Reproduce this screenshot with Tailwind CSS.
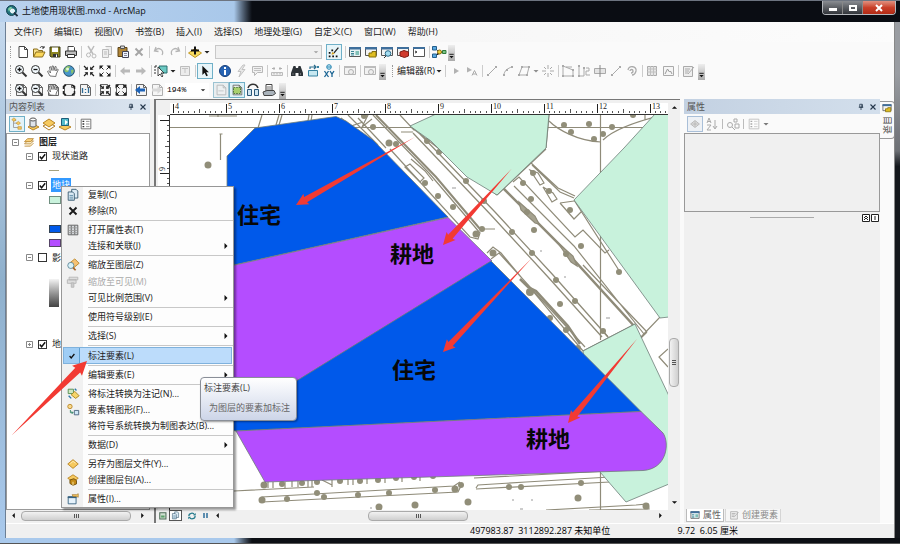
<!DOCTYPE html>
<html lang="zh-CN">
<head>
    <meta charset="utf-8">
    <meta name="viewport" content="width=device-width, initial-scale=1.0">
    <title>土地使用现状图.mxd - ArcMap</title>
    <script src="https://cdn.jsdelivr.net/npm/@tailwindcss/browser@4"></script>
</head>
<body class="relative flex h-screen flex-col overflow-hidden bg-[#15181d] font-['Open_Sans','Noto_Sans_CJK_SC',sans-serif] text-[9px] leading-3 text-[#222]">

    <!-- Icon set, 16x16 -->
    <svg class="hidden" xmlns="http://www.w3.org/2000/svg">
        <symbol id="i-new" viewBox="0 0 16 16"><path d="M4 2.500h5.500l3 3v8H4z" fill="#fff" stroke="#444"/><path d="M9.500 2.500v3h3" fill="none" stroke="#444"/></symbol>
        <symbol id="i-open" viewBox="0 0 16 16"><path d="M2.500 13V5h4l1 1.500h4V8" fill="#f7e08a" stroke="#8a6d1c"/><path d="M2.500 13l2.500-5h9l-2.500 5z" fill="#fbd75b" stroke="#8a6d1c"/><path d="M9 4c1-2 3-2 4 0m0-2v2h-2" fill="none" stroke="#333"/></symbol>
        <symbol id="i-save" viewBox="0 0 16 16"><path d="M3 3h10v10H4l-1-1z" fill="#8b8420" stroke="#3b3a18"/><path d="M5 3.500h6V8H5z" fill="#fff"/><path d="M6 10h5v3H6z" fill="#333"/><path d="M9 10.500h1V13H9z" fill="#fff"/></symbol>
        <symbol id="i-print" viewBox="0 0 16 16"><path d="M5 7V2.500h5.500l1 1V7" fill="#fff" stroke="#444"/><path d="M2.500 7h11v4.500h-11z" fill="#bbb" stroke="#333"/><path d="M4.500 10.500h7v3h-7z" fill="#fff" stroke="#333"/></symbol>
        <symbol id="i-cut" viewBox="0 0 16 16"><path d="M5 2l5 8M11 2L7 9" stroke="#bbb" stroke-width="1.500"/><circle cx="5.500" cy="11" r="2" fill="none" stroke="#bbb"/><circle cx="11" cy="12" r="2" fill="none" stroke="#bbb"/></symbol>
        <symbol id="i-copy-off" viewBox="0 0 16 16"><path d="M3.500 5.500h6v8h-6zM6.500 2.500h6v8h-3" fill="#eee" stroke="#bbb"/><path d="M5 8h3M5 10h3" stroke="#bbb"/></symbol>
        <symbol id="i-copy" viewBox="0 0 16 16"><path d="M6.500 1.500h5l2 2v8h-7z" fill="#dcebf5" stroke="#33576e"/><path d="M2.500 4.500h5l2 2v7.500h-7z" fill="#dcebf5" stroke="#33576e"/><path d="M4 8.500h4M4 10.500h4M4 12.500h4" stroke="#5b8aa6"/></symbol>
        <symbol id="i-paste" viewBox="0 0 16 16"><path d="M3 3.500h9v9H3z" fill="#b08536" stroke="#5d4519"/><path d="M5.500 2h4v2.500h-4z" fill="#ddd" stroke="#555"/><path d="M7.500 7.500h6v6h-6z" fill="#eef4ff" stroke="#445"/><path d="M9 9.500h3M9 11.500h3" stroke="#889"/></symbol>
        <symbol id="i-x-off" viewBox="0 0 16 16"><path d="M4.500 4.500l7 7m0-7l-7 7" stroke="#a5a5a5" stroke-width="2"/></symbol>
        <symbol id="i-x" viewBox="0 0 16 16"><path d="M4 4l8 8m0-8l-8 8" stroke="#1a1a1a" stroke-width="2.200"/></symbol>
        <symbol id="i-undo" viewBox="0 0 16 16"><path d="M5 3L3.500 7l4 .5M4 7c3-5 10-1 7 4" fill="none" stroke="#b5b5b5" stroke-width="1.300"/></symbol>
        <symbol id="i-redo" viewBox="0 0 16 16"><path d="M11 3l1.500 4-4 .5M12 7c-3-5-10-1-7 4" fill="none" stroke="#b5b5b5" stroke-width="1.300"/></symbol>
        <symbol id="i-add" viewBox="0 0 16 16"><path d="M1.500 9L8 4.500 14.500 9 8 13.500z" fill="#f8dc62" stroke="#c29820"/><path d="M8 2.500v8M4 6.500h8" stroke="#111" stroke-width="2"/></symbol>
        <symbol id="i-sketch" viewBox="0 0 16 16"><path d="M2 13h12" stroke="#111" stroke-width="2" stroke-dasharray="2 2"/><path d="M8 9l5-6" stroke="#222" stroke-width="1.500"/><path d="M5 11l1-3 3 2z" fill="#d9a21c"/><path d="M2 8h2v2H2zM5 5h2v2H5z" fill="#111"/></symbol>
        <symbol id="i-win-table" viewBox="0 0 16 16"><path d="M2.500 3.500h11v9h-11z" fill="#e6f2f4" stroke="#555"/><path d="M2 3h12v2.500H2z" fill="#3f6f9c"/><path d="M4 7.500h3M4 9.500h3M4 11h3" stroke="#3c8796"/><path d="M8.500 7h3.500v4H8.500z" fill="#80bfb7"/></symbol>
        <symbol id="i-win-cat" viewBox="0 0 16 16"><path d="M2.500 3.500h11v8h-11z" fill="#f3f3f3" stroke="#555"/><path d="M2 3h12v2.500H2z" fill="#3f6f9c"/><path d="M6 9h3V7.500h4V13H6z" fill="#dfbd22" stroke="#86700b"/></symbol>
        <symbol id="i-win-search" viewBox="0 0 16 16"><path d="M2.500 3.500h11v8h-11z" fill="#f3f3f3" stroke="#555"/><path d="M2 3h12v2.500H2z" fill="#3f6f9c"/><circle cx="9" cy="9.500" r="2.800" fill="#a4dcf0" stroke="#2c6d8c"/><path d="M7 12l-2 2" stroke="#333"/></symbol>
        <symbol id="i-win-tool" viewBox="0 0 16 16"><path d="M2.500 3.500h11v8h-11z" fill="#f3f3f3" stroke="#555"/><path d="M2 3h12v2H2z" fill="#3f6f9c"/><path d="M5 8l4-1.500L13.500 8v4l-4 1.500L5 12z" fill="#d03a2c" stroke="#7d1c13"/></symbol>
        <symbol id="i-win-py" viewBox="0 0 16 16"><path d="M2.500 3.500h11v9h-11z" fill="#fff" stroke="#555"/><path d="M2 3h12v2H2z" fill="#3f6f9c"/><path d="M4 7l2 1-2 1" fill="none" stroke="#333"/></symbol>
        <symbol id="i-model" viewBox="0 0 16 16"><path d="M4 4l4 4M4 12l4-4h5" stroke="#444"/><path d="M1.500 2.500h4v3.500h-4z" fill="#5aa9e0" stroke="#235e8c"/><path d="M1.500 10h4v3.500h-4z" fill="#5aa9e0" stroke="#235e8c"/><circle cx="8.500" cy="8" r="2" fill="#f0cf3a" stroke="#8c7312"/><path d="M11.500 6.500h3.500v3h-3.500z" fill="#7dc488" stroke="#2f7a3a"/></symbol>
        <symbol id="i-zoomin" viewBox="0 0 16 16"><circle cx="6.500" cy="6.500" r="4" fill="#f4fbff" stroke="#333"/><path d="M9.500 9.500l4 4" stroke="#333" stroke-width="2"/><path d="M4.500 6.500h4M6.500 4.500v4" stroke="#111" stroke-width="1.300"/></symbol>
        <symbol id="i-zoomout" viewBox="0 0 16 16"><circle cx="6.500" cy="6.500" r="4" fill="#f4fbff" stroke="#333"/><path d="M9.500 9.500l4 4" stroke="#333" stroke-width="2"/><path d="M4.500 6.500h4" stroke="#111" stroke-width="1.300"/></symbol>
        <symbol id="i-pan" viewBox="0 0 16 16"><path d="M5 13L2.500 8.500l1-.7L5.500 10 4.500 4l1.200-.3L7 7.500V3h1.300L9 7.500l1-4 1.200.3-.4 4.200 1.500-2 1 .6-2 4.400-.5 2.500z" fill="#fff" stroke="#555" stroke-width=".8"/></symbol>
        <symbol id="i-globe" viewBox="0 0 16 16"><circle cx="8" cy="8" r="5.300" fill="#4795c9" stroke="#24506d"/><path d="M5 4c2-1.500 4-1 4 0S7 6 7.500 7.500 5 10 4 8.500 3.500 5.500 5 4zM10 7l2.500-.5c.5 2-.5 4-2 4.500z" fill="#8cc36a"/><circle cx="6.500" cy="6" r="1.500" fill="#e5f6d8"/></symbol>
        <symbol id="i-in4" viewBox="0 0 16 16"><path d="M3 3l3.500 3.500M13 3L9.500 6.500M3 13l3.500-3.500M13 13L9.500 9.500" stroke="#222" stroke-width="1.200"/><path d="M3.500 6.800h3.300V3.500zM12.500 6.800H9.200V3.500zM3.500 9.200h3.300v3.300zM12.500 9.200H9.200v3.300z" fill="#222"/></symbol>
        <symbol id="i-out4" viewBox="0 0 16 16"><path d="M3 3l3.500 3.500M13 3L9.500 6.500M3 13l3.500-3.500M13 13L9.500 9.500" stroke="#222"/><path d="M2.500 2.500h4l-4 4zM13.500 2.500h-4l4 4zM2.500 13.500h4l-4-4zM13.500 13.500h-4l4-4z" fill="#222"/></symbol>
        <symbol id="i-left-off" viewBox="0 0 16 16"><path d="M3 8l4.500-4v2.500H13v3H7.500V12z" fill="#b9b9b9"/></symbol>
        <symbol id="i-right-off" viewBox="0 0 16 16"><path d="M13 8L8.500 4v2.500H3v3h5.500V12z" fill="#b9b9b9"/></symbol>
        <symbol id="i-selfeat" viewBox="0 0 16 16"><path d="M6 3h8v7H8z" fill="#6bc9c3" stroke="#2b6f6e"/><path d="M2 3v8M2 3h3" stroke="#333" stroke-dasharray="2 1"/><path d="M5 4v9l2-2 2 3 1-1-2-3h3z" fill="#fff" stroke="#222" stroke-width=".8"/></symbol>
        <symbol id="i-box-off" viewBox="0 0 16 16"><path d="M3.500 3.500h9v9h-9z" fill="#ececec" stroke="#bdbdbd"/><path d="M5 5.500h6M8 6v4" stroke="#c4c4c4"/></symbol>
        <symbol id="i-cursor" viewBox="0 0 16 16"><path d="M5 2v10.500l2.500-2.500 2 4 1.800-1-2-3.700h3.200z" fill="#111"/></symbol>
        <symbol id="i-info" viewBox="0 0 16 16"><circle cx="8" cy="8" r="5.500" fill="#2764b4" stroke="#153d78"/><path d="M7 7h2v5H7zM7 4h2v2H7z" fill="#fff"/></symbol>
        <symbol id="i-bolt-off" viewBox="0 0 16 16"><path d="M10 2L5 8.500h3L6 14l6-7.500H9L12 2z" fill="#e9e9e9" stroke="#c3c3c3"/></symbol>
        <symbol id="i-note-off" viewBox="0 0 16 16"><path d="M3.500 3.500h10v6h-5l-3 3v-3h-2z" fill="#f1f1f1" stroke="#b8b8b8"/><path d="M5 5.500h7M5 7.500h7" stroke="#c0c0c0"/></symbol>
        <symbol id="i-ruler-off" viewBox="0 0 16 16"><path d="M2.500 9.500h11v3h-11z" fill="#eee" stroke="#bbb"/><path d="M5 10v1.500M8 10v1.500M11 10v1.500M3 5.500h3M10 5.500h3M5 4v3M11 4v3" stroke="#b0b0b0"/></symbol>
        <symbol id="i-find" viewBox="0 0 16 16"><path d="M4.500 3h2l.5 2h2l.500-2h2l2.500 7v3H9.500v-3h-3v3H2v-3z" fill="#2d3338"/><path d="M3.500 11h1M11 11h1" stroke="#aaa"/></symbol>
        <symbol id="i-route" viewBox="0 0 16 16"><path d="M3.500 7.500h9v5.500h-9z" fill="#c6e7f0" stroke="#3681a0"/><path d="M5 6V4h6m-2-2l2 2-2 2" fill="none" stroke="#2a6c8c" stroke-width="1.200"/><path d="M12 3h2v2h-2z" fill="#3681a0"/></symbol>
        <symbol id="i-xy" viewBox="0 0 16 16"><circle cx="8" cy="4" r="2.300" fill="#d2f0fb" stroke="#2b87b2"/><path d="M6 4h4" stroke="#2b87b2"/><path d="M3.500 8l4 6m0-6l-4 6M9 8l2 3 2-3m-2 3v3" fill="none" stroke="#1b6594" stroke-width="1.300"/></symbol>
        <symbol id="i-win-off" viewBox="0 0 16 16"><path d="M2.500 3.500h11v8h-11z" fill="#f2f2f2" stroke="#b5b5b5"/><path d="M2 3h12v2H2z" fill="#bcbcbc"/><circle cx="9" cy="9" r="2.500" fill="#eee" stroke="#b0b0b0"/></symbol>
        <symbol id="i-play-off" viewBox="0 0 16 16"><path d="M6 5L11 8l-5 3z" fill="#b2b2b2"/></symbol>
        <symbol id="i-playa-off" viewBox="0 0 16 16"><path d="M3 4l5 3-5 2.500z" fill="#b2b2b2"/><path d="M8 12.500l2.500-5 2.500 5M9 11h3" fill="none" stroke="#aaa"/></symbol>
        <symbol id="i-line-off" viewBox="0 0 16 16"><path d="M4 12l8-8" stroke="#aaa"/><path d="M3 11h2v2H3zM11 3h2v2h-2z" fill="#aaa"/></symbol>
        <symbol id="i-arc-off" viewBox="0 0 16 16"><path d="M4 12c0-4 4-7 8-8" fill="none" stroke="#aaa"/><path d="M3 11h2v2H3zM6 6h2v2H6zM11 3h2v2h-2z" fill="#aaa"/></symbol>
        <symbol id="i-poly-off" viewBox="0 0 16 16"><path d="M3 12L6 4h7l-2 8z" fill="none" stroke="#aaa"/><path d="M2 11h2v2H2zM5 3h2v2H5zM12 3h2v2h-2zM10 11h2v2h-2z" fill="#aaa"/></symbol>
        <symbol id="i-star-off" viewBox="0 0 16 16"><path d="M8 2v4M8 10v4M2 8h4M10 8h4M4 4l2 2M12 4l-2 2M4 12l2-2M12 12l-2-2" stroke="#aaa"/></symbol>
        <symbol id="i-vert-off" viewBox="0 0 16 16"><path d="M3 3v10h10V7L3 3M6 4h6" fill="none" stroke="#aaa"/><path d="M2 2h2v2H2zM2 12h2v2H2zM12 12h2v2h-2zM12 6h2v2h-2z" fill="#aaa"/></symbol>
        <symbol id="i-cols-off" viewBox="0 0 16 16"><path d="M3 3v10M8 4v9M3 13h5M10 5h3v3h-3v4h4" fill="none" stroke="#aaa"/><path d="M2 2h2v2H2zM7 4h2v2H7zM2 12h2v2H2z" fill="#aaa"/></symbol>
        <symbol id="i-split-off" viewBox="0 0 16 16"><path d="M2.500 5.500h11v5h-11z" fill="#e4e4e4" stroke="#aaa"/><path d="M8 2v12" stroke="#888"/></symbol>
        <symbol id="i-rot-off" viewBox="0 0 16 16"><path d="M4 7c1-5 9-4 8 1-.500 2-2 4-4 4M6 8c0-2 3-2 3 0s-2 2-2 2" fill="none" stroke="#aaa" stroke-width="1.300"/></symbol>
        <symbol id="i-table-off" viewBox="0 0 16 16"><path d="M3.500 3.500h9v9h-9z" fill="#e6e6e6" stroke="#aaa"/><path d="M3 6h10M3 9h10M6.500 3v10M9.500 3v10" stroke="#c0c0c0"/></symbol>
        <symbol id="i-mount-off" viewBox="0 0 16 16"><path d="M3.500 3.500h10v9h-10z" fill="#f5f5f5" stroke="#aaa"/><path d="M5 11l2.500-5 2 3 1-1 1.500 3" fill="none" stroke="#999"/></symbol>
        <symbol id="i-edit-off" viewBox="0 0 16 16"><path d="M3.500 3.500h9v10h-9z" fill="#eee" stroke="#aaa"/><path d="M5 6h5M5 8h4M5 10h3M8 11l6-7" stroke="#aaa"/></symbol>
        <symbol id="i-page" viewBox="0 0 16 16"><path d="M3.500 2.500h7l3 3v8h-10z" fill="#f4f4f4" stroke="#666"/><path d="M10.500 2.500v3h3" fill="none" stroke="#666"/></symbol>
        <symbol id="i-pin" viewBox="0 0 16 16"><path d="M5.500 2.500h5v6h-5zM3.500 8.500h9M8 9v5" fill="none" stroke="#26384d" stroke-width="1.600"/><path d="M9 3h2v6H9z" fill="#26384d"/></symbol>
        <symbol id="i-close" viewBox="0 0 16 16"><path d="M3 3l10 10m0-10L3 13" stroke="#26384d" stroke-width="2.200"/></symbol>
        <symbol id="i-layer" viewBox="0 0 16 16"><path d="M2 8l6-5 6 5-6 5z" fill="#f6c95e" stroke="#b88423"/><path d="M5 7.500L8 5l3 2" fill="none" stroke="#fff0bf"/></symbol>
        <symbol id="i-layers" viewBox="0 0 16 16"><path d="M2 10.500h8l4-4H6zM2 13.500h8l4-4" fill="#fff3d0" stroke="#b07b22"/><path d="M2 7.500h8l4-4H6z" fill="#fbd27a" stroke="#b07b22"/></symbol>
        <symbol id="i-stack" viewBox="0 0 16 16"><path d="M2 10l6-3 6 3-6 4z" fill="#fff" stroke="#b07b22"/><path d="M2 7l6-4 6 4-6 4z" fill="#f6c95e" stroke="#b88423"/></symbol>
        <symbol id="i-db" viewBox="0 0 16 16"><path d="M3 11l5-3 6 3-6 3z" fill="#f6c95e" stroke="#b88423"/><path d="M5 3.500v6c0 2 6 2 6 0v-6z" fill="#dfe4ea" stroke="#555"/><ellipse cx="8" cy="3.500" rx="3" ry="1.500" fill="#fff" stroke="#555"/></symbol>
        <symbol id="i-tree" viewBox="0 0 16 16"><path d="M4 4v8h5M4 7h5M4 4h3" fill="none" stroke="#999"/><path d="M2 3l2.500-2L7 3 4.500 5zM7 7l2.500-2L12 7 9.500 9z" fill="#f6c95e" stroke="#b88423" stroke-width=".6"/><path d="M9 11h4v3H9z" fill="#f6c95e" stroke="#b88423" stroke-width=".6"/></symbol>
        <symbol id="i-selmap" viewBox="0 0 16 16"><path d="M2 11l6-3 6 3-6 3z" fill="#f6c95e" stroke="#b88423"/><path d="M4.500 2.500h7v7h-7z" fill="#52bccb" stroke="#1d5d7a"/><path d="M8 4v5l3-3z" fill="#fff"/></symbol>
        <symbol id="i-list" viewBox="0 0 16 16"><path d="M2.500 2.500h11v11h-11z" fill="#fff" stroke="#666"/><path d="M4 5h2M4 8h2M4 11h2" stroke="#333" stroke-width="1.600"/><path d="M8 5h4M8 8h4M8 11h4" stroke="#888"/></symbol>
        <symbol id="i-grid" viewBox="0 0 16 16"><path d="M2.500 2.500h11v11h-11z" fill="#d8dcdf" stroke="#555"/><path d="M6 3v10M10 3v10" stroke="#555"/><path d="M3 5.500h10M3 8.500h10M3 11h10" stroke="#999"/></symbol>
        <symbol id="i-zoomlayer" viewBox="0 0 16 16"><path d="M4 6l6-5 5 5-6 5z" fill="#f6c275" stroke="#b88423"/><circle cx="5.500" cy="8.500" r="3.500" fill="#d9f1f8" stroke="#5d8798"/><path d="M8 11l3 3" stroke="#a5652a" stroke-width="2"/></symbol>
        <symbol id="i-zoomvis" viewBox="0 0 16 16"><path d="M3.500 2.500h10v3h-10zM1.500 5.500h10v4h-10z" fill="#ddd" stroke="#b5b5b5"/><path d="M6 9h3v5H6z" fill="#ccc" stroke="#b5b5b5"/></symbol>
        <symbol id="i-convert" viewBox="0 0 16 16"><path d="M2.500 2.500h6v5h-6z" fill="#cfe8c4" stroke="#4f8a4b"/><path d="M6 9l4-4 5 5-4 3z" fill="#f6d56c" stroke="#a88018"/><path d="M3 10l3 3M10 2l2 2" stroke="#2d79a8" stroke-width="1.600"/></symbol>
        <symbol id="i-graphic" viewBox="0 0 16 16"><circle cx="4.500" cy="4" r="2.500" fill="#f9d98c" stroke="#b88423"/><path d="M5 8v3h3M6.500 9.500L8 11l-1.500 1.500" fill="none" stroke="#2a8060"/><path d="M9.500 8.500h5v5h-5z" fill="#cfe7f6" stroke="#46607a"/></symbol>
        <symbol id="i-pack" viewBox="0 0 16 16"><path d="M2 6l6-4 6 4-6 4z" fill="#f6c95e" stroke="#b88423"/><path d="M4.500 8L9 6.500l3 2v4L8 14l-3.500-2z" fill="#c58b17" stroke="#6b4906"/><path d="M8 10v4" stroke="#fff0b0"/></symbol>
        <symbol id="i-props" viewBox="0 0 16 16"><path d="M2.500 5.500h9v8h-9z" fill="#e6f2fb" stroke="#35607f"/><path d="M2 5h10v2H2z" fill="#35607f"/><path d="M7 3h5l2-1v4l-2-1H8z" fill="#f7c864" stroke="#9a6b19" stroke-width=".7"/></symbol>
        <symbol id="i-more" viewBox="0 0 8 16"><path d="M1.500 9.500h5" stroke="#111"/><path d="M1.500 11.500h5L4 14z" fill="#111"/></symbol>
        <symbol id="i-caret" viewBox="0 0 8 16"><path d="M1.500 7h5L4 9.500z" fill="#222"/></symbol>
        <symbol id="i-right" viewBox="0 0 8 8"><path d="M2.500 1l3 3-3 3z" fill="#111"/></symbol>
        <symbol id="i-tick" viewBox="0 0 10 10"><path d="M2 5l2 2.500L8 2.500" fill="none" stroke="#111" stroke-width="1.600"/></symbol>
    </svg>

    <!-- Title bar -->
    <header class="flex h-[22px] shrink-0 items-start justify-between border-t border-[#6d7480] bg-linear-to-r from-[#b9d2ee] from-0% via-[#a9c8ea] via-26% to-[#0a0d13] to-28% pl-1.5">
        <h1 class="flex items-center gap-1 pt-1 text-[#111]">
            <svg class="h-3 w-3" viewBox="0 0 12 12"><circle cx="5.500" cy="5.500" r="5" fill="#1f6f7c" stroke="#174551"/><path d="M2 4c2-3 4-2 4-1s-3 2-3 4z" fill="#7fd0a2"/><circle cx="6.500" cy="6" r="2" fill="#d9f4fb" stroke="#fff"/><path d="M8 7.500l3.500 3.500" stroke="#234" stroke-width="1.800"/></svg>
            土地使用现状图.mxd - ArcMap
        </h1>
        <div class="mr-1 flex h-[14px] overflow-hidden rounded-b border border-t-0 border-[#b5b8bd]">
            <button aria-label="最小化" class="flex w-5 items-center justify-center border-r border-[#888] bg-linear-to-b from-[#8a8d92] to-[#33363b]"><span class="mt-1 h-[3px] w-2 bg-white"></span></button>
            <button aria-label="最大化" class="flex w-5 items-center justify-center border-r border-[#888] bg-linear-to-b from-[#8a8d92] to-[#33363b]"><span class="h-1.5 w-2 border-2 border-white"></span></button>
            <button aria-label="关闭" class="flex w-8 items-center justify-center bg-linear-to-b from-[#e0907f] via-[#c9402a] to-[#b22a14]"><svg class="h-2 w-2" viewBox="0 0 8 8"><path d="M1 1l6 6m0-6L1 7" stroke="#fff" stroke-width="2"/></svg></button>
        </div>
    </header>

    <div class="flex min-h-0 flex-1">
        <div class="w-1.5 shrink-0 border-r border-[#6c7f95] bg-linear-to-b from-[#c5d9ee] via-[#8fb0cc] to-[#a9c9ec]"></div>

        <div class="flex min-w-0 flex-1 flex-col bg-[#fafafa]">
            <!-- Menu bar -->
            <nav class="flex h-5 shrink-0 items-center gap-3 bg-linear-to-r from-[#f2f2f2] to-[#fcfcfc] pl-2 whitespace-nowrap">
                <button>文件(F)</button>
                <button>编辑(E)</button>
                <button>视图(V)</button>
                <button>书签(B)</button>
                <button>插入(I)</button>
                <button>选择(S)</button>
                <button>地理处理(G)</button>
                <button>自定义(C)</button>
                <button>窗口(W)</button>
                <button>帮助(H)</button>
            </nav>

            <!-- Standard toolbar -->
            <div class="flex h-[19px] shrink-0 items-center pl-1">
                <span class="mr-1 h-3 border-l border-dotted border-[#999]"></span>
                <button aria-label="新建"><svg class="h-4 w-4"><use href="#i-new"/></svg></button>
                <button aria-label="打开"><svg class="h-4 w-4"><use href="#i-open"/></svg></button>
                <button aria-label="保存"><svg class="h-4 w-4"><use href="#i-save"/></svg></button>
                <button aria-label="打印"><svg class="h-4 w-4"><use href="#i-print"/></svg></button>
                <span class="ml-[2px] mr-px h-3 w-px bg-[#ccc]"></span>
                <button aria-label="剪切"><svg class="h-4 w-4"><use href="#i-cut"/></svg></button>
                <button aria-label="复制"><svg class="h-4 w-4"><use href="#i-copy-off"/></svg></button>
                <button aria-label="粘贴"><svg class="h-4 w-4"><use href="#i-paste"/></svg></button>
                <button aria-label="删除"><svg class="h-4 w-4"><use href="#i-x-off"/></svg></button>
                <span class="ml-[2px] mr-px h-3 w-px bg-[#ccc]"></span>
                <button aria-label="撤销"><svg class="h-4 w-4"><use href="#i-undo"/></svg></button>
                <button aria-label="恢复"><svg class="h-4 w-4"><use href="#i-redo"/></svg></button>
                <span class="ml-[2px] mr-px h-3 w-px bg-[#ccc]"></span>
                <button aria-label="添加数据" class="flex"><svg class="h-4 w-4"><use href="#i-add"/></svg><svg class="h-4 w-2"><use href="#i-caret"/></svg></button>
                <span class="relative ml-1 flex">
                    <select aria-label="比例" disabled class="h-[14px] w-[107px] appearance-none border border-[#c8c8c8] bg-[#f0f0f0]"><option></option></select>
                    <svg class="absolute right-0.5 top-0 h-[14px] w-2 opacity-40"><use href="#i-caret"/></svg>
                </span>
                <button aria-label="编辑器工具条" class="ml-1 mr-[2px] border border-[#6fb0c8] bg-[#e8f5f9]"><svg class="h-[14px] w-[14px]"><use href="#i-sketch"/></svg></button>
                <span class="mx-px h-3 w-px bg-[#ccc]"></span>
                <button aria-label="内容列表"><svg class="h-4 w-4"><use href="#i-win-table"/></svg></button>
                <button aria-label="目录"><svg class="h-4 w-4"><use href="#i-win-cat"/></svg></button>
                <button aria-label="搜索"><svg class="h-4 w-4"><use href="#i-win-search"/></svg></button>
                <button aria-label="工具箱"><svg class="h-4 w-4"><use href="#i-win-tool"/></svg></button>
                <button aria-label="Python"><svg class="h-4 w-4"><use href="#i-win-py"/></svg></button>
                <span class="ml-[2px] mr-px h-3 w-px bg-[#ccc]"></span>
                <button aria-label="模型构建器"><svg class="h-4 w-4"><use href="#i-model"/></svg></button>
                <button aria-label="更多" class="ml-px self-end bg-linear-to-b from-[#eee] to-[#aaa]"><svg class="h-4 w-[7px]"><use href="#i-more"/></svg></button>
            </div>

            <!-- Tools and editor toolbars -->
            <div class="flex h-[19px] shrink-0 items-center pl-1">
                <span class="mr-0.5 h-3 border-l border-dotted border-[#999]"></span>
                <button aria-label="放大"><svg class="h-4 w-4"><use href="#i-zoomin"/></svg></button>
                <button aria-label="缩小"><svg class="h-4 w-4"><use href="#i-zoomout"/></svg></button>
                <button aria-label="平移"><svg class="h-4 w-4"><use href="#i-pan"/></svg></button>
                <button aria-label="全图"><svg class="h-4 w-4"><use href="#i-globe"/></svg></button>
                <span class="ml-[2px] mr-px h-3 w-px bg-[#ccc]"></span>
                <button aria-label="固定比例放大"><svg class="h-4 w-4"><use href="#i-in4"/></svg></button>
                <button aria-label="固定比例缩小"><svg class="h-4 w-4"><use href="#i-out4"/></svg></button>
                <span class="ml-[2px] mr-px h-3 w-px bg-[#ccc]"></span>
                <button aria-label="上一视图"><svg class="h-4 w-4"><use href="#i-left-off"/></svg></button>
                <button aria-label="下一视图"><svg class="h-4 w-4"><use href="#i-right-off"/></svg></button>
                <span class="ml-[2px] mr-px h-3 w-px bg-[#ccc]"></span>
                <button aria-label="选择要素" class="flex"><svg class="h-4 w-4"><use href="#i-selfeat"/></svg><svg class="h-4 w-2"><use href="#i-caret"/></svg></button>
                <button aria-label="清除选择"><svg class="h-4 w-4"><use href="#i-box-off"/></svg></button>
                <span class="ml-[2px] mr-px h-3 w-px bg-[#ccc]"></span>
                <button aria-label="选择元素" class="border border-[#6fb0c8] bg-[#e8f5f9]"><svg class="h-[14px] w-[14px]"><use href="#i-cursor"/></svg></button>
                <button aria-label="识别" class="ml-1"><svg class="h-4 w-4"><use href="#i-info"/></svg></button>
                <button aria-label="超链接"><svg class="h-4 w-4"><use href="#i-bolt-off"/></svg></button>
                <button aria-label="HTML 弹出窗口"><svg class="h-4 w-4"><use href="#i-note-off"/></svg></button>
                <span class="ml-[2px] mr-px h-3 w-px bg-[#ccc]"></span>
                <button aria-label="测量"><svg class="h-4 w-4"><use href="#i-ruler-off"/></svg></button>
                <span class="ml-[2px] mr-px h-3 w-px bg-[#ccc]"></span>
                <button aria-label="查找"><svg class="h-4 w-4"><use href="#i-find"/></svg></button>
                <button aria-label="查找路径"><svg class="h-4 w-4"><use href="#i-route"/></svg></button>
                <button aria-label="转到 XY"><svg class="h-4 w-4"><use href="#i-xy"/></svg></button>
                <span class="mx-[2px] h-3 w-px bg-[#ccc]"></span>
                <button aria-label="时间滑块"><svg class="h-4 w-4"><use href="#i-win-off"/></svg></button>
                <span class="ml-[2px] mr-px h-3 w-px bg-[#ccc]"></span>
                <button aria-label="查看器窗口"><svg class="h-4 w-4"><use href="#i-win-off"/></svg></button>
                <button aria-label="更多" class="ml-px self-end bg-linear-to-b from-[#eee] to-[#aaa]"><svg class="h-4 w-[7px]"><use href="#i-more"/></svg></button>
                <span class="ml-1.5 mr-1 h-3 border-l border-dotted border-[#999]"></span>
                <button class="flex items-center whitespace-nowrap">编辑器(R)<svg class="h-4 w-2"><use href="#i-caret"/></svg></button>
                <span class="mx-[2px] h-3 w-px bg-[#ccc]"></span>
                <button aria-label="编辑工具"><svg class="h-4 w-4"><use href="#i-play-off"/></svg></button>
                <button aria-label="编辑注记工具"><svg class="h-4 w-4"><use href="#i-playa-off"/></svg></button>
                <span class="ml-[2px] mr-px h-3 w-px bg-[#ccc]"></span>
                <button aria-label="直线段"><svg class="h-4 w-4"><use href="#i-line-off"/></svg></button>
                <button aria-label="弧段"><svg class="h-4 w-4"><use href="#i-arc-off"/></svg></button>
                <button aria-label="追踪" class="flex"><svg class="h-4 w-4"><use href="#i-poly-off"/></svg><svg class="h-4 w-2 opacity-50"><use href="#i-caret"/></svg></button>
                <button aria-label="点"><svg class="h-4 w-4"><use href="#i-star-off"/></svg></button>
                <span class="ml-[2px] mr-px h-3 w-px bg-[#ccc]"></span>
                <button aria-label="编辑折点"><svg class="h-4 w-4"><use href="#i-vert-off"/></svg></button>
                <button aria-label="整形要素"><svg class="h-4 w-4"><use href="#i-cols-off"/></svg></button>
                <button aria-label="裁剪面"><svg class="h-4 w-4"><use href="#i-split-off"/></svg></button>
                <button aria-label="分割"><svg class="h-4 w-4"><use href="#i-line-off"/></svg></button>
                <button aria-label="旋转"><svg class="h-4 w-4"><use href="#i-rot-off"/></svg></button>
                <span class="ml-[2px] mr-px h-3 w-px bg-[#ccc]"></span>
                <button aria-label="属性"><svg class="h-4 w-4"><use href="#i-table-off"/></svg></button>
                <button aria-label="草图属性"><svg class="h-4 w-4"><use href="#i-mount-off"/></svg></button>
                <span class="ml-[2px] mr-px h-3 w-px bg-[#ccc]"></span>
                <button aria-label="创建要素"><svg class="h-4 w-4"><use href="#i-edit-off"/></svg></button>
                <button aria-label="更多" class="ml-0.5 self-end bg-linear-to-b from-[#eee] to-[#aaa]"><svg class="h-4 w-[7px]"><use href="#i-more"/></svg></button>
            </div>

            <!-- Layout toolbar -->
            <div class="flex h-[19px] shrink-0 items-center pl-1">
                <span class="mr-0.5 h-3 border-l border-dotted border-[#999]"></span>
                <button aria-label="放大页面"><svg class="h-4 w-4" viewBox="0 0 16 16"><use href="#i-page"/><use href="#i-zoomin"/></svg></button>
                <button aria-label="缩小页面"><svg class="h-4 w-4" viewBox="0 0 16 16"><use href="#i-page"/><use href="#i-zoomout"/></svg></button>
                <button aria-label="平移页面"><svg class="h-4 w-4" viewBox="0 0 16 16"><use href="#i-page"/><use href="#i-pan"/></svg></button>
                <button aria-label="缩放整页"><svg class="h-4 w-4" viewBox="0 0 16 16"><use href="#i-page"/><path d="M2.500 7V4.500L5 3M13.500 7V4.500L11 3M2.500 9v2.500L5 13M13.500 9v2.500L11 13" fill="none" stroke="#222" stroke-width="1.500"/></svg></button>
                <button aria-label="缩放至100%"><svg class="h-4 w-4" viewBox="0 0 16 16"><use href="#i-page"/><path d="M5.500 6v5M11.500 6v5M8.500 7v1M8.500 10v1" stroke="#2d6b96" stroke-width="1.300"/></svg></button>
                <span class="ml-[2px] mr-px h-3 w-px bg-[#ccc]"></span>
                <button aria-label="页面固定放大"><svg class="h-4 w-4" viewBox="0 0 16 16"><use href="#i-page"/><use href="#i-in4"/></svg></button>
                <button aria-label="页面固定缩小"><svg class="h-4 w-4" viewBox="0 0 16 16"><use href="#i-page"/><use href="#i-out4"/></svg></button>
                <span class="ml-[2px] mr-px h-3 w-px bg-[#ccc]"></span>
                <button aria-label="上一范围"><svg class="h-4 w-4" viewBox="0 0 16 16"><use href="#i-page"/><path d="M2 8l5-4v2.500h5v3H7V12z" fill="#1d63b8"/></svg></button>
                <button aria-label="下一范围"><svg class="h-4 w-4 opacity-50" viewBox="0 0 16 16"><use href="#i-page"/><use href="#i-right-off"/></svg></button>
                <span class="relative flex">
                    <select aria-label="页面比例" class="h-[14px] w-11 appearance-none bg-white pl-0.5 font-['Liberation_Mono',monospace] text-[8px] leading-3 text-black"><option>194%</option></select>
                    <svg class="pointer-events-none absolute right-0.5 top-0 h-[14px] w-2"><use href="#i-caret"/></svg>
                </span>
                <button aria-label="切换描绘模式" class="ml-1 border border-[#9cc3d2] bg-[#e9eef0]"><svg class="h-[14px] w-[14px] opacity-40" viewBox="0 0 16 16"><use href="#i-page"/><path d="M5 9h6" stroke="#888"/></svg></button>
                <button aria-label="焦点数据框" class="border border-[#6fb0c8] bg-[#dff1f7]"><svg class="h-[14px] w-[14px]" viewBox="0 0 16 16"><use href="#i-page"/><path d="M4 5h8v7H4z" fill="#a9cf6d" stroke="#416b2c" stroke-dasharray="2 1"/></svg></button>
                <button aria-label="更改布局"><svg class="h-4 w-4" viewBox="0 0 16 16"><path d="M3 6c2-5 8-5 10 0" fill="none" stroke="#333" stroke-width="1.500"/><path d="M2.500 7.500h4v6h-4zM9.500 7.500h4v6h-4z" fill="#cfe4f0" stroke="#2b587a"/></svg></button>
                <button aria-label="数据驱动页面"><svg class="h-4 w-4" viewBox="0 0 16 16"><path d="M5 2.500h6v7H5z" fill="#fff" stroke="#444"/><path d="M6 5h4M6 7h4" stroke="#777"/><path d="M2 10l4-1.500h7l1.500 3-3 2H3z" fill="#aab3bb" stroke="#444"/></svg></button>
                <button aria-label="更多" class="ml-0.5 self-end bg-linear-to-b from-[#eee] to-[#aaa]"><svg class="h-4 w-[7px]"><use href="#i-more"/></svg></button>
            </div>

            <main class="flex min-h-0 flex-1 bg-[#f0f0f0]">
                <!-- Table of contents -->
                <aside class="mr-1 flex w-[144px] shrink-0 flex-col">
                    <div class="flex h-[15px] shrink-0 items-center bg-linear-to-r from-[#c6d3e2] to-[#dbe5f0] px-[3px] text-[#555]">
                        <h2 class="flex-1">内容列表</h2>
                        <button aria-label="固定"><svg class="mr-1 h-2 w-2"><use href="#i-pin"/></svg></button>
                        <button aria-label="关闭"><svg class="h-2 w-2"><use href="#i-close"/></svg></button>
                    </div>
                    <div class="flex h-[19px] shrink-0 items-center bg-[#fafafa] pl-[3px]">
                        <button aria-label="按绘制顺序列出" class="border border-[#6fb0c8] bg-[#e4f3f8]"><svg class="h-[14px] w-[14px]"><use href="#i-tree"/></svg></button>
                        <button aria-label="按源列出"><svg class="h-4 w-4"><use href="#i-db"/></svg></button>
                        <button aria-label="按可见性列出"><svg class="h-4 w-4"><use href="#i-stack"/></svg></button>
                        <button aria-label="按选择列出"><svg class="h-4 w-4"><use href="#i-selmap"/></svg></button>
                        <span class="mx-[2px] h-3 w-px bg-[#ccc]"></span>
                        <button aria-label="选项"><svg class="h-4 w-4 p-px"><use href="#i-list"/></svg></button>
                    </div>
                    <div class="min-h-0 flex-1 overflow-hidden border border-[#999] bg-white pt-px whitespace-nowrap">
                        <div class="flex h-[14px] items-center pl-[5px] font-bold">
                            <svg class="mr-1 h-[7px] w-[7px]" viewBox="0 0 7 7"><path d="M.5.5h6v6h-6zM2 3.500h3" fill="#fff" stroke="#888"/></svg>
                            <svg class="mr-1 h-3 w-3"><use href="#i-layers"/></svg>图层
                        </div>
                        <div class="flex h-[14px] items-center gap-[5px] pl-[19px]">
                            <svg class="h-[7px] w-[7px]" viewBox="0 0 7 7"><path d="M.5.5h6v6h-6zM2 3.500h3" fill="#fff" stroke="#888"/></svg>
                            <label class="flex items-center gap-[5px]"><span class="grid h-[9px] w-[9px]"><input type="checkbox" checked class="peer col-start-1 row-start-1 h-[9px] w-[9px] appearance-none border border-[#333] bg-white"><svg class="pointer-events-none invisible col-start-1 row-start-1 h-[9px] w-[9px] peer-checked:visible"><use href="#i-tick"/></svg></span>现状道路</label>
                        </div>
                        <div class="flex h-[15px] items-center pl-[42px]"><span class="h-px w-2.5 bg-[#a5a27e]"></span></div>
                        <div class="flex h-[14px] items-center gap-[5px] pl-[19px]">
                            <svg class="h-[7px] w-[7px]" viewBox="0 0 7 7"><path d="M.5.5h6v6h-6zM2 3.500h3" fill="#fff" stroke="#888"/></svg>
                            <label class="flex items-center gap-1"><span class="grid h-[9px] w-[9px]"><input type="checkbox" checked class="peer col-start-1 row-start-1 h-[9px] w-[9px] appearance-none border border-[#333] bg-white"><svg class="pointer-events-none invisible col-start-1 row-start-1 h-[9px] w-[9px] peer-checked:visible"><use href="#i-tick"/></svg></span><span class="bg-[#3399ff] px-px leading-[14px] text-white">地块</span></label>
                        </div>
                        <div class="flex h-[15px] items-center pl-[42px]"><span class="h-2 w-3 border border-[#6f8f7f] bg-[#c9f2dc]"></span></div>
                        <div class="h-[14px]"></div>
                        <div class="flex h-[15px] items-center pl-[42px]"><span class="h-2 w-3 border border-[#345] bg-[#0059ea]"></span></div>
                        <div class="flex h-[14px] items-center pl-[42px]"><span class="h-2 w-3 border border-[#546] bg-[#b44dff]"></span></div>
                        <div class="flex h-[15px] items-center gap-[5px] pl-[19px]">
                            <svg class="h-[7px] w-[7px]" viewBox="0 0 7 7"><path d="M.5.5h6v6h-6zM2 3.500h3" fill="#fff" stroke="#888"/></svg>
                            <label class="flex items-center gap-[5px]"><input type="checkbox" class="h-[9px] w-[9px] appearance-none border border-[#333] bg-white">影像</label>
                        </div>
                        <div class="h-[72px] pl-[42px] pt-[14px]"><div class="h-7 w-2.5 bg-linear-to-b from-[#f4f4f4] to-[#444]"></div></div>
                        <div class="flex h-[14px] items-center gap-[5px] pl-[19px]">
                            <svg class="h-[7px] w-[7px]" viewBox="0 0 7 7"><path d="M.5.5h6v6h-6zM2 3.500h3M3.500 2v3" fill="#fff" stroke="#888"/></svg>
                            <label class="flex items-center gap-[5px]"><span class="grid h-[9px] w-[9px]"><input type="checkbox" checked class="peer col-start-1 row-start-1 h-[9px] w-[9px] appearance-none border border-[#333] bg-white"><svg class="pointer-events-none invisible col-start-1 row-start-1 h-[9px] w-[9px] peer-checked:visible"><use href="#i-tick"/></svg></span>地形</label>
                        </div>
                    </div>
                    <div class="mb-0.5 flex h-[11px] shrink-0 items-center gap-1 px-1">
                        <svg class="h-[7px] w-[7px] rotate-180"><use href="#i-right"/></svg>
                        <div class="flex h-[10px] w-[110px] items-center justify-center gap-px rounded-sm border border-[#aaa] bg-linear-to-b from-[#f2f2f2] to-[#cfcfcf]"><span class="h-1 w-px bg-[#555]"></span><span class="h-1 w-px bg-[#555]"></span><span class="h-1 w-px bg-[#555]"></span></div>
                        <svg class="ml-auto h-[7px] w-[7px]"><use href="#i-right"/></svg>
                    </div>
                </aside>

                <!-- Map view -->
                <section class="flex min-w-0 flex-1 flex-col border-l-2 border-t border-[#777] bg-[#f0f0f0]">
                    <div class="flex h-[15px] shrink-0">
                        <div class="min-w-0 flex-1 overflow-hidden pl-[14px] pt-0.5">
                            <svg class="block h-[13px] w-full" viewBox="170 102 499 13" preserveAspectRatio="xMinYMin slice">
                                <defs>
                                    <pattern id="hticks" x="173" y="0" width="53" height="130" patternUnits="userSpaceOnUse">
                                        <path d="M.5 104v9" stroke="#222"/>
                                        <path d="M5.500 111v2M10.500 111v2M15.500 111v2M21.500 111v2M32.500 111v2M37.500 111v2M42.500 111v2M48.500 111v2M26.500 109v4" stroke="#555"/>
                                    </pattern>
                                </defs>
                                <path d="M170 103h499v12H170z" fill="#fff"/>
                                <path d="M170 103h499v12H170z" fill="url(#hticks)"/>
                                <path d="M170 114.500h499" stroke="#333"/>
                                <g font-family="Liberation Serif, serif" font-size="8" fill="#222">
                                    <text x="175" y="109">4</text><text x="228" y="109">5</text><text x="281" y="109">6</text><text x="334" y="109">7</text><text x="387" y="109">8</text><text x="440" y="109">9</text><text x="493" y="109">10</text><text x="546" y="109">11</text><text x="599" y="109">12</text><text x="652" y="109">13</text>
                                </g>
                            </svg>
                        </div>
                        <button aria-label="向上" class="w-3 shrink-0"><svg class="mx-auto h-[7px] w-[7px] -rotate-90"><use href="#i-right"/></svg></button>
                    </div>
                    <div class="flex min-h-0 flex-1">
                        <svg class="h-full w-[14px] shrink-0" viewBox="156 115 14 395" preserveAspectRatio="xMinYMin slice">
                            <defs>
                                <pattern id="vticks" x="0" y="120" width="170" height="53" patternUnits="userSpaceOnUse">
                                    <path d="M160 .5h9" stroke="#222"/>
                                    <path d="M167 5.500h2M167 10.500h2M167 15.500h2M167 21.500h2M167 32.500h2M167 37.500h2M167 42.500h2M167 48.500h2M165 26.500h4" stroke="#555"/>
                                </pattern>
                            </defs>
                            <path d="M158 115h11v395h-11z" fill="#fff"/>
                            <path d="M156 115h14v395h-14z" fill="url(#vticks)"/>
                            <path d="M169.500 115v395" stroke="#333"/>
                            <text transform="translate(165 171) rotate(-90)" font-family="Liberation Serif, serif" font-size="8" fill="#222">9</text>
                        </svg>
                        <svg class="h-full min-w-0 flex-1" viewBox="170 115 498 395" preserveAspectRatio="xMinYMin slice">
                            <path d="M170 115h498v395H170z" fill="#fff"/>

                            <!-- Roads -->
                            <g fill="none" stroke="#8f8b79" stroke-width="1.200">
                                <path d="M170 127.500h498M600.500 115v225M600.500 471v40M218 115v2M209 116h28M219.500 134h3M220.500 134v26M262 115l-4 13M279 115l-3 10M282 115l-3 10M309 115l-1 6M312 115l-1 6"/>
                                <path d="M341 118l10 8 12-4M348 115l30 30M368 115l-6 12 10-8M400 115l14 15 6-3M401 132h12M358 118l28 30"/>
                                <path d="M373 115l56 58 51 60-2 6-8-2-80-88"/>
                                <path d="M376 115l60 62 44 52" stroke-width="2"/>
                                <path d="M405 167l5-3 14 14-4 4zM411 159l14 12 8 10"/>
                                <path d="M420 134l75 78 58 63 55 62M413 133l78 82 57 62 54 60" stroke-width="1.300"/>
                                <path d="M411 127l36 28 50 40"/>
                                <path d="M503 188l60 60 72 79" stroke-width="2.500"/>
                                <path d="M514 186l60 60 70 88M583 265l64 67M647 332l-6 6"/>
                                <path d="M530 162l28 26 17 8M532 165l28 27 14 6M497 195l49-46"/>
                                <path d="M513 182l6-5 56 60 8-7 22 23 4-3M560 203l14-2M560 203l14 16 7-7M574 200l46 72"/>
                                <path d="M530 170l8 3 6 10-4 2zM543 187l10 6 4 6-5 3z"/>
                                <path d="M519 202l16 14 4 8-4-1-14-13zM558 243l15 13 4 10-6-4z" fill="#a5a28f"/>
                                <path d="M487 253l6-6 8 6 82 98M491 259l8-6 86 94"/>
                                <path d="M520 279l8 8 8 4 32 35 12 18" stroke-width="2.500"/>
                                <path d="M549 121c8 8 28 20 52 21M603 140c10-10 30-18 64-26M549 115l-3 33M645 115v5"/>
                                <path d="M482 229h13M640 338l20-21 8-1M668 349l-9 8 9 10"/>
                                <path d="M590 350l34-18M583 351l52-27M603 331l5 6"/>
                                <path d="M452 188h4M462 221h2M540 251h2M606 318h4M564 277h2" stroke="#999"/>
                                <path d="M234 491l80-4M474 478l135-7M262 500v-3l52-3 140-8 6-4M262 502l196-10 3-6M476 488l2-3 48-3 84-5M476 489l134-7M546 510l90-5 12-1 1 5-60 1"/>
                                <path d="M268 482v6M273 482v6M285 482v6M292 481v6M298 481v6M308 480v7M312 480v7M322 480l10 5M332 480v7M348 479v6M353 479v6M367 478v6M385 478v5M402 477v5M420 477v4"/>
                                <path d="M512 500h2M531 500h2M370 508h2M520 509h3" stroke="#999"/>
                            </g>
                            <g fill="#918e79">
                                <circle cx="208" cy="165" r="3.500"/><circle cx="364" cy="116" r="3"/><circle cx="373" cy="127" r="3"/><circle cx="389" cy="143" r="3.500"/><circle cx="396" cy="144" r="3"/>
                                <circle cx="564" cy="125" r="3"/><circle cx="589" cy="124" r="3"/><circle cx="612" cy="127" r="3"/><circle cx="571" cy="132" r="3"/><circle cx="594" cy="139" r="3"/><circle cx="603" cy="134" r="3"/><circle cx="633" cy="115" r="3"/>
                                <circle cx="427" cy="141" r="3"/><circle cx="439" cy="152" r="3"/><circle cx="466" cy="181" r="3"/><circle cx="484" cy="201" r="3"/><circle cx="512" cy="232" r="3"/><circle cx="532" cy="253" r="3"/><circle cx="556" cy="280" r="3"/><circle cx="575" cy="301" r="3"/><circle cx="603" cy="331" r="3"/>
                                <circle cx="425" cy="183" r="3"/><circle cx="438" cy="196" r="3"/><circle cx="453" cy="207" r="3"/><circle cx="482" cy="229" r="3"/><circle cx="476" cy="234" r="3.500"/><circle cx="493" cy="253" r="3.500"/>
                                <circle cx="523" cy="183" r="3"/><circle cx="531" cy="199" r="3"/><circle cx="527" cy="212" r="3"/><circle cx="534" cy="230" r="3"/><circle cx="533" cy="173" r="3"/><circle cx="549" cy="191" r="3"/><circle cx="570" cy="210" r="3"/><circle cx="581" cy="246" r="3"/><circle cx="566" cy="254" r="3"/><circle cx="619" cy="272" r="3"/>
                                <circle cx="560" cy="304" r="3"/><circle cx="530" cy="292" r="4"/><circle cx="550" cy="318" r="3"/><circle cx="566" cy="330" r="3"/><circle cx="578" cy="348" r="3"/>
                                <circle cx="264" cy="485" r="3.500"/><circle cx="282" cy="484" r="3"/><circle cx="302" cy="483" r="3"/><circle cx="317" cy="482" r="3"/><circle cx="340" cy="481" r="3"/><circle cx="360" cy="481" r="3"/><circle cx="378" cy="480" r="3"/><circle cx="396" cy="478" r="3"/><circle cx="414" cy="477" r="3"/><circle cx="433" cy="476" r="3"/>
                                <circle cx="262" cy="500" r="3.500"/><circle cx="287" cy="499" r="3"/><circle cx="317" cy="493" r="3"/><circle cx="324" cy="497" r="3"/><circle cx="358" cy="495" r="3"/><circle cx="389" cy="493" r="3"/><circle cx="435" cy="490" r="3"/><circle cx="455" cy="489" r="3.500"/><circle cx="461" cy="485" r="3"/>
                                <circle cx="509" cy="487" r="3"/><circle cx="521" cy="487" r="3"/><circle cx="581" cy="483" r="3"/><circle cx="578" cy="498" r="3.500"/><circle cx="646" cy="506" r="3.500"/><circle cx="468" cy="502" r="3.500"/><circle cx="415" cy="505" r="3.500"/><circle cx="379" cy="507" r="3.500"/>
                            </g>

                            <!-- Parcels -->
                            <g stroke="#6f7d78" stroke-width=".8">
                                <path d="M410 126l26-12h113l-3 34-49 47-30-18-36-36z" fill="#c8f2dc"/>
                                <path d="M655 114h14v203l-9 1-86-118 50-52z" fill="#c8f2dc"/>
                                <path d="M635 324l34 72v88l-43 18-26-30-17-121z" fill="#c8f2dc"/>
                                <path d="M227 156l28-28 81-11.500 10 4.500 27 19 75 77-214 48-7-60z" fill="#0059ea"/>
                                <path d="M448 217.500l44 43.500-195 120-80 48v-160z" fill="#b44dff"/>
                                <path d="M491 261l150 150.500L236 431l-16-3z" fill="#0059ea"/>
                                <path d="M236 431l405-19.500 22 21.500c7 10 4 36-20 37.500L265 482z" fill="#b44dff"/>
                            </g>

                            <g font-family="Noto Sans CJK SC, sans-serif" font-size="22" font-weight="700" fill="#080808">
                                <text x="237" y="223">住宅</text>
                                <text x="390" y="262">耕地</text>
                                <text x="392" y="378">住宅</text>
                                <text x="526" y="447">耕地</text>
                            </g>

                            <g fill="#f23a33">
                                <path transform="translate(296 205) rotate(-29.700)" d="M0 0L12-6 11-3 137 0 11 3 12 6z"/>
                                <path transform="translate(443 245) rotate(-48)" d="M0 0L12-6 11-3 103 0 11 3 12 6z"/>
                                <path transform="translate(443 352) rotate(-46.600)" d="M0 0L12-6 11-3 129 0 11 3 12 6z"/>
                                <path transform="translate(568 423) rotate(-50.600)" d="M0 0L12-6 11-3 109 0 11 3 12 6z"/>
                            </g>
                        </svg>
                        <div class="flex w-3 shrink-0 flex-col items-center pb-1">
                            <div class="mb-auto mt-[223px] flex h-[49px] w-2.5 flex-col items-center justify-center gap-px rounded-sm border border-[#aaa] bg-linear-to-r from-[#f2f2f2] to-[#cfcfcf]"><span class="h-px w-1 bg-[#555]"></span><span class="h-px w-1 bg-[#555]"></span><span class="h-px w-1 bg-[#555]"></span></div>
                            <svg class="h-[7px] w-[7px] rotate-90"><use href="#i-right"/></svg>
                        </div>
                    </div>
                    <div class="mb-0.5 flex h-[11px] shrink-0 items-center pr-4">
                        <button aria-label="数据视图"><svg class="ml-px h-[11px] w-[11px]" viewBox="0 0 16 16"><path d="M4 4h9v9H4z" fill="#cfe0d0" stroke="#4d6b57" stroke-width="1.500"/><path d="M6 8h5v3H6z" fill="#5aa06a"/></svg></button>
                        <button aria-label="布局视图" class="ml-px border border-[#555] bg-white"><svg class="h-[9px] w-[11px]"><use href="#i-copy"/></svg></button>
                        <button aria-label="刷新" class="ml-[5px]"><svg class="h-[10px] w-[10px]" viewBox="0 0 16 16"><path d="M3 8c0-5 7-6 9-2M13 8c0 5-7 6-9 2" fill="none" stroke="#247a8c" stroke-width="2"/><path d="M14 3v4h-4zM2 13V9h4z" fill="#247a8c"/></svg></button>
                        <button aria-label="暂停" class="ml-1"><svg class="h-[9px] w-[9px]" viewBox="0 0 9 9"><path d="M3 2v5M6 2v5" stroke="#2c6d9a" stroke-width="1.500"/></svg></button>
                        <svg class="ml-1 h-[7px] w-[7px] rotate-180"><use href="#i-right"/></svg>
                        <div class="ml-[147px] flex h-[10px] w-[100px] items-center justify-center gap-px rounded-sm border border-[#aaa] bg-linear-to-b from-[#f2f2f2] to-[#cfcfcf]"><span class="h-1 w-px bg-[#555]"></span><span class="h-1 w-px bg-[#555]"></span><span class="h-1 w-px bg-[#555]"></span></div>
                        <svg class="ml-auto h-[7px] w-[7px]"><use href="#i-right"/></svg>
                    </div>
                </section>

                <!-- Attributes -->
                <aside class="flex w-[200px] shrink-0 flex-col border-l-4 border-[#fafafa]">
                    <div class="flex h-[15px] shrink-0 items-center bg-linear-to-r from-[#c3d1e2] to-[#d3dfec] px-[3px] text-[#555]">
                        <h2 class="flex-1">属性</h2>
                        <button aria-label="固定"><svg class="mr-1 h-2 w-2"><use href="#i-pin"/></svg></button>
                        <button aria-label="关闭"><svg class="h-2 w-2"><use href="#i-close"/></svg></button>
                    </div>
                    <div class="flex h-[19px] shrink-0 items-center bg-[#fafafa] pl-[3px]">
                        <button aria-label="图层视图" class="border border-[#a9bfd8] bg-[#eef1f5]"><svg class="h-[14px] w-[14px]" viewBox="0 0 16 16"><path d="M3 8l5-4 5 4-5 4zM5 8h6M8 5v6" fill="#ddd" stroke="#b5b5b5"/></svg></button>
                        <button aria-label="排序" class="ml-px"><svg class="h-4 w-4" viewBox="0 0 16 16"><path d="M3 7l2-5 2 5M3.500 5.500h3M3 9h4l-4 5h4M11 4v8M9 10l2 3 2-3" fill="none" stroke="#aaa"/></svg></button>
                        <span class="mx-[2px] h-2.5 w-px bg-[#bbb]"></span>
                        <button aria-label="查询"><svg class="h-4 w-4" viewBox="0 0 16 16"><circle cx="5" cy="9" r="2.500" fill="none" stroke="#aaa"/><path d="M7 11l3 3M9 3h3v3H9zM10 8h4v4h-4z" fill="none" stroke="#aaa"/></svg></button>
                        <span class="mx-[2px] h-2.5 w-px bg-[#bbb]"></span>
                        <button aria-label="选项" class="flex"><svg class="h-4 w-4 p-px opacity-40"><use href="#i-list"/></svg><svg class="h-4 w-2 opacity-60"><use href="#i-caret"/></svg></button>
                    </div>
                    <div class="h-[79px] shrink-0 border border-[#999]"></div>
                    <div class="relative flex h-[11px] shrink-0 items-center justify-end gap-px pr-px">
                        <span class="absolute inset-x-0 mx-auto h-px w-16 bg-[#aaa]"></span>
                        <button aria-label="折叠"><svg class="h-2 w-2" viewBox="0 0 8 8"><path d="M.5.5h7v7h-7zM2 4l2-2 2 2M2 6l2-2 2 2" fill="#fff" stroke="#222"/></svg></button>
                        <button aria-label="展开"><svg class="h-2 w-2" viewBox="0 0 8 8"><path d="M.5.5h7v7h-7zM4 2v4" fill="#fff" stroke="#222"/></svg></button>
                    </div>
                    <div class="flex-1"></div>
                    <div class="flex h-[15px] shrink-0 items-center gap-px pl-0.5 whitespace-nowrap">
                        <button class="flex h-[13px] items-center gap-0.5 border border-t-0 border-[#bbb] bg-white px-0.5 text-[#666]"><svg class="h-3 w-3"><use href="#i-win-table"/></svg>属性</button>
                        <button class="flex h-[13px] items-center gap-0.5 border border-t-0 border-[#d5d5d5] bg-[#f6f6f6] px-0.5 text-[#888]"><svg class="h-3 w-3"><use href="#i-edit-off"/></svg>创建要素</button>
                    </div>
                </aside>

                <div class="w-[14px] shrink-0 bg-[#fafafa] pt-0.5">
                    <button class="flex flex-col items-center rounded-r-sm border border-l-0 border-[#999] px-px pb-1 text-[#444]">
                        <svg class="h-3 w-3"><use href="#i-win-cat"/></svg>
                        <span class="pt-0.5 [text-orientation:sideways] [writing-mode:vertical-rl]">目录</span>
                    </button>
                </div>
            </main>

            <!-- Status bar -->
            <footer class="flex h-[15px] shrink-0 items-center justify-end border-t border-white bg-[#f0f0f0] pr-[156px] whitespace-pre text-black">
                <span class="mr-[67px]">497983.87  3112892.287 未知单位</span>
                <span>9.72  6.05 厘米</span>
            </footer>
        </div>

        <div class="w-1.5 shrink-0 border-l border-[#888] bg-linear-to-b from-[#9a9da2] from-10% via-[#6c6f74] via-25% to-[#14171c] to-28%"></div>
    </div>
    <div class="h-1.5 shrink-0 border-b border-[#555] bg-linear-to-r from-[#a9c9ec] from-26% to-[#0c0f14] to-28%"></div>

    <!-- Layer context menu -->
    <div role="menu" class="absolute left-[61px] top-[186px] flex w-[173px] flex-col border border-[#979797] bg-linear-to-r from-[#f1f1f1] from-12% to-[#fdfdfd] to-12% whitespace-nowrap shadow-[2px_2px_2px_rgba(0,0,0,0.4)]">
        <button role="menuitem" class="flex h-4 items-center pl-1"><svg class="mr-2 h-[14px] w-[14px]"><use href="#i-copy"/></svg>复制(C)</button>
        <button role="menuitem" class="flex h-4 items-center pl-1"><svg class="mr-2 h-[14px] w-[14px]"><use href="#i-x"/></svg>移除(R)</button>
        <hr class="my-px ml-[26px] border-[#c8c8c8]">
        <button role="menuitem" class="flex h-4 items-center pl-1"><svg class="mr-2 h-[14px] w-[14px]"><use href="#i-grid"/></svg>打开属性表(T)</button>
        <button role="menuitem" class="flex h-4 items-center justify-between pl-[26px] pr-[3px]">连接和关联(J)<svg class="h-2 w-2"><use href="#i-right"/></svg></button>
        <hr class="my-px ml-[26px] border-[#c8c8c8]">
        <button role="menuitem" class="flex h-4 items-center pl-1"><svg class="mr-2 h-[14px] w-[14px]"><use href="#i-zoomlayer"/></svg>缩放至图层(Z)</button>
        <button role="menuitem" disabled class="flex h-[17px] items-center pl-1 text-[#aaa]"><svg class="mr-2 h-[14px] w-[14px]"><use href="#i-zoomvis"/></svg>缩放至可见(M)</button>
        <button role="menuitem" class="flex h-4 items-center justify-between pl-[26px] pr-[3px]">可见比例范围(V)<svg class="h-2 w-2"><use href="#i-right"/></svg></button>
        <hr class="my-px ml-[26px] border-[#c8c8c8]">
        <button role="menuitem" class="flex h-4 items-center pl-[26px]">使用符号级别(E)</button>
        <hr class="my-px ml-[26px] border-[#c8c8c8]">
        <button role="menuitem" class="flex h-4 items-center justify-between pl-[26px] pr-[3px]">选择(S)<svg class="h-2 w-2"><use href="#i-right"/></svg></button>
        <hr class="my-px ml-[26px] border-[#c8c8c8]">
        <button role="menuitemcheckbox" aria-checked="true" class="mx-px flex h-[17px] items-center border border-[#7fb2dd] bg-[#bcdcfb]"><span class="mr-2 flex h-full w-4 items-center justify-center border-r border-[#5f9fd0] bg-[#9fcdf5]"><svg class="h-2 w-2"><use href="#i-tick"/></svg></span>标注要素(L)</button>
        <hr class="my-px ml-[26px] border-[#c8c8c8]">
        <button role="menuitem" class="flex h-4 items-center justify-between pl-[26px] pr-[3px]">编辑要素(E)<svg class="h-2 w-2"><use href="#i-right"/></svg></button>
        <hr class="my-px ml-[26px] border-[#c8c8c8]">
        <button role="menuitem" class="flex h-4 items-center pl-1"><svg class="mr-2 h-[14px] w-[14px]"><use href="#i-convert"/></svg>将标注转换为注记(N)...</button>
        <button role="menuitem" class="flex h-4 items-center pl-1"><svg class="mr-2 h-[14px] w-[14px]"><use href="#i-graphic"/></svg>要素转图形(F)...</button>
        <button role="menuitem" class="flex h-4 items-center pl-[26px]">将符号系统转换为制图表达(B)...</button>
        <hr class="my-px ml-[26px] border-[#c8c8c8]">
        <button role="menuitem" class="flex h-4 items-center justify-between pl-[26px] pr-[3px]">数据(D)<svg class="h-2 w-2"><use href="#i-right"/></svg></button>
        <hr class="my-px ml-[26px] border-[#c8c8c8]">
        <button role="menuitem" class="flex h-4 items-center pl-1"><svg class="mr-2 h-[14px] w-[14px]"><use href="#i-layer"/></svg>另存为图层文件(Y)...</button>
        <button role="menuitem" class="flex h-4 items-center pl-1"><svg class="mr-2 h-[14px] w-[14px]"><use href="#i-pack"/></svg>创建图层包(A)...</button>
        <hr class="my-px ml-[26px] border-[#c8c8c8]">
        <button role="menuitem" class="flex h-4 items-center pl-1"><svg class="mr-2 h-[14px] w-[14px]"><use href="#i-props"/></svg>属性(I)...</button>
    </div>

    <div role="tooltip" class="absolute left-[200px] top-[377px] flex h-11 w-[97px] flex-col justify-between rounded-sm border border-[#8a8f98] bg-linear-to-b from-white to-[#cdd5e8] py-1 pl-[3px] whitespace-nowrap text-[#444] shadow-[1px_1px_2px_rgba(0,0,0,0.4)]">
        <p>标注要素(L)</p>
        <p class="pb-0.5 pl-[5px] text-[#666]">为图层的要素加标注</p>
    </div>

    <!-- Callout pointing at the label command -->
    <svg class="pointer-events-none absolute left-2 top-[358px] h-20 w-20" viewBox="8 358 80 80"><path transform="translate(87 361) rotate(135.400)" fill="#f23a33" d="M0 0L14-7 13-3.500 106 0 13 3.500 14 7z"/></svg>
</body>
</html>
